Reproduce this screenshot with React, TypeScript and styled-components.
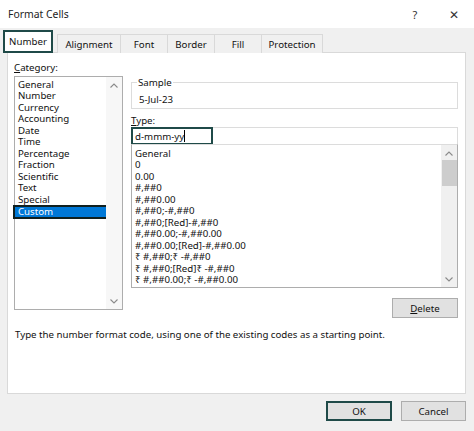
import React from "react";
import styled, { createGlobalStyle } from "styled-components";

const GlobalStyle = createGlobalStyle`
  html, body {
    margin: 0;
    padding: 0;
    background: #f0f0f0;
  }
  * {
    box-sizing: border-box;
  }
`;

const categories = [
  "General",
  "Number",
  "Currency",
  "Accounting",
  "Date",
  "Time",
  "Percentage",
  "Fraction",
  "Scientific",
  "Text",
  "Special",
  "Custom",
];

const formats = [
  "General",
  "0",
  "0.00",
  "#,##0",
  "#,##0.00",
  "#,##0;-#,##0",
  "#,##0;[Red]-#,##0",
  "#,##0.00;-#,##0.00",
  "#,##0.00;[Red]-#,##0.00",
  "₹ #,##0;₹ -#,##0",
  "₹ #,##0;[Red]₹ -#,##0",
  "₹ #,##0.00;₹ -#,##0.00",
];

const tabs = [
  { label: "Number", width: 50 },
  { label: "Alignment", width: 64 },
  { label: "Font", width: 48 },
  { label: "Border", width: 48 },
  { label: "Fill", width: 48 },
  { label: "Protection", width: 62 },
];

const Chevron: React.FC<{ down?: boolean }> = ({ down }) => (
  <svg width="8" height="5" viewBox="0 0 8 5">
    <path
      d={down ? "M0.5 0.5 L4 4 L7.5 0.5" : "M0.5 4.5 L4 1 L7.5 4.5"}
      fill="none"
      stroke="#8a8a8a"
      strokeWidth="1.1"
    />
  </svg>
);

export default function App() {
  return (
    <>
      <GlobalStyle />
      <Dialog>
        <TitleBar>
          <Title>Format Cells</Title>
          <TitleButtons>
            <TitleButton>?</TitleButton>
            <TitleButton $close>✕</TitleButton>
          </TitleButtons>
        </TitleBar>

        <TabRow>
          {tabs.map((t, i) => (
            <Tab key={t.label} $active={i === 0} $width={t.width}>
              {t.label}
            </Tab>
          ))}
        </TabRow>

        <Panel>
          <Body>
            <LeftColumn>
              <Label>
                <u>C</u>ategory:
              </Label>
              <CategoryList>
                <Items>
                  {categories.map((c) => (
                    <CategoryItem key={c} $selected={c === "Custom"}>
                      {c}
                    </CategoryItem>
                  ))}
                </Items>
                <ScrollTrack $light>
                  <Chevron />
                  <Chevron down />
                </ScrollTrack>
              </CategoryList>
            </LeftColumn>

            <RightColumn>
              <SampleGroup>
                <SampleLegend>Sample</SampleLegend>
                <SampleValue>5-Jul-23</SampleValue>
              </SampleGroup>

              <TypeLabel>
                <u>T</u>ype:
              </TypeLabel>
              <TypeInput>
                <TypeHighlight>
                  d-mmm-yy<Caret />
                </TypeHighlight>
              </TypeInput>

              <FormatList>
                <Items>
                  {formats.map((f) => (
                    <FormatItem key={f}>{f}</FormatItem>
                  ))}
                </Items>
                <ScrollTrack>
                  <Chevron />
                  <Thumb />
                  <Spacer />
                  <Chevron down />
                </ScrollTrack>
              </FormatList>

              <DeleteRow>
                <Button $width={66}>
                  <u>D</u>elete
                </Button>
              </DeleteRow>
            </RightColumn>
          </Body>

          <Description>
            Type the number format code, using one of the existing codes as a
            starting point.
          </Description>
        </Panel>

        <Footer>
          <Button $width={66} $default>
            OK
          </Button>
          <Button $width={65}>Cancel</Button>
        </Footer>
      </Dialog>
    </>
  );
}

const Dialog = styled.div`
  width: 474px;
  height: 431px;
  background: #f0f0f0;
  font-family: "Noto Sans", "Open Sans", sans-serif;
  font-size: 9.7px;
  color: #111;
  display: flex;
  flex-direction: column;
  overflow: hidden;
`;

const TitleBar = styled.div`
  height: 28px;
  background: #ffffff;
  display: flex;
  align-items: center;
  justify-content: space-between;
  padding-left: 8px;
`;

const Title = styled.div`
  font-size: 10.4px;
  color: #222;
`;

const TitleButtons = styled.div`
  display: flex;
  align-items: center;
  height: 100%;
`;

const TitleButton = styled.div<{ $close?: boolean }>`
  width: ${(p) => (p.$close ? "40px" : "38px")};
  height: 100%;
  display: flex;
  align-items: center;
  justify-content: center;
  font-size: ${(p) => (p.$close ? "12px" : "11px")};
  color: #333;
`;

const TabRow = styled.div`
  height: 25px;
  display: flex;
  align-items: flex-end;
  padding-left: 3px;
  margin-bottom: -1px;
  position: relative;
  z-index: 1;
`;

const Tab = styled.div<{ $active?: boolean; $width: number }>`
  width: ${(p) => p.$width}px;
  height: ${(p) => (p.$active ? "23px" : "19px")};
  display: flex;
  align-items: center;
  justify-content: center;
  background: ${(p) => (p.$active ? "#ffffff" : "#f0f0f0")};
  border: ${(p) => (p.$active ? "2px solid #1f4a48" : "1px solid #d9d9d9")};
  border-bottom: ${(p) => (p.$active ? "2px solid #1f4a48" : "none")};
  margin-left: ${(p) => (p.$active ? "0" : "-1px")};
  &:nth-child(2) {
    margin-left: 4px;
  }
`;

const Panel = styled.div`
  margin: 0 8px 0 7px;
  height: 342px;
  background: #ffffff;
  border: 1px solid #d9d9d9;
  padding: 8px 7px 0 6px;
  display: flex;
  flex-direction: column;
`;

const Body = styled.div`
  display: flex;
  gap: 8px;
`;

const LeftColumn = styled.div`
  width: 109px;
  display: flex;
  flex-direction: column;
`;

const Label = styled.div`
  height: 15px;
  line-height: 13px;
`;

const CategoryList = styled.div`
  height: 234px;
  border: 1px solid #adadad;
  display: flex;
`;

const Items = styled.div`
  flex: 1;
  display: flex;
  flex-direction: column;
  min-width: 0;
`;

const CategoryItem = styled.div<{ $selected?: boolean }>`
  height: ${(p) => (p.$selected ? "10px" : "11.55px")};
  line-height: ${(p) => (p.$selected ? "10px" : "11.55px")};
  padding-left: 3px;
  white-space: nowrap;
  background: ${(p) => (p.$selected ? "#0078d7" : "transparent")};
  color: ${(p) => (p.$selected ? "#ffffff" : "#111")};
  box-shadow: ${(p) => (p.$selected ? "0 0 0 2px #10201f" : "none")};
  margin-top: ${(p) => (p.$selected ? "1px" : "0")};
  &:first-child {
    margin-top: 1.5px;
  }
`;

const ScrollTrack = styled.div<{ $light?: boolean }>`
  width: 16px;
  background: ${(p) => (p.$light ? "#f7f7f7" : "#f0f0f0")};
  display: flex;
  flex-direction: column;
  align-items: center;
  justify-content: space-between;
  padding: 6px 0 5px;
`;

const Thumb = styled.div`
  width: 15px;
  height: 26px;
  background: #cdcdcd;
  margin-top: 4px;
`;

const Spacer = styled.div`
  flex: 1;
`;

const RightColumn = styled.div`
  flex: 1;
  display: flex;
  flex-direction: column;
`;

const SampleGroup = styled.fieldset`
  margin: 0;
  margin-top: 15px;
  height: 33px;
  border: 1px solid #dcdcdc;
  padding: 0 0 0 7px;
`;

const SampleLegend = styled.legend`
  padding: 0 1px;
  margin-left: -2px;
  line-height: 13px;
`;

const SampleValue = styled.div`
  line-height: 14px;
  padding-top: 4px;
`;

const TypeLabel = styled.div`
  margin-top: 5px;
  height: 13px;
  line-height: 13px;
`;

const TypeInput = styled.div`
  height: 18px;
  border: 1px solid #dcdcdc;
  display: flex;
  margin-bottom: -1px;
`;

const TypeHighlight = styled.div`
  width: 82px;
  margin: -1px 0 -1px -1px;
  border: 2px solid #1f4a48;
  display: flex;
  align-items: center;
  padding-left: 2px;
`;

const Caret = styled.span`
  display: inline-block;
  width: 1px;
  height: 12px;
  background: #000;
`;

const FormatList = styled.div`
  height: 144px;
  border: 1px solid #adadad;
  border-top: 1px solid #dcdcdc;
  display: flex;
`;

const FormatItem = styled.div`
  height: 11.5px;
  line-height: 11.5px;
  padding-left: 3px;
  white-space: nowrap;
  &:first-child {
    margin-top: 2.5px;
  }
`;

const DeleteRow = styled.div`
  display: flex;
  justify-content: flex-end;
  margin-top: 10px;
`;

const Button = styled.div<{ $width: number; $default?: boolean }>`
  width: ${(p) => p.$width}px;
  height: 20px;
  display: flex;
  align-items: center;
  justify-content: center;
  background: #e1e1e1;
  border: ${(p) => (p.$default ? "2px solid #1f4a48" : "1px solid #adadad")};
`;

const Description = styled.div`
  margin-top: 10px;
  padding-left: 1px;
  white-space: nowrap;
`;

const Footer = styled.div`
  display: flex;
  justify-content: flex-end;
  gap: 9px;
  padding: 7px 8px 0 0;
`;
